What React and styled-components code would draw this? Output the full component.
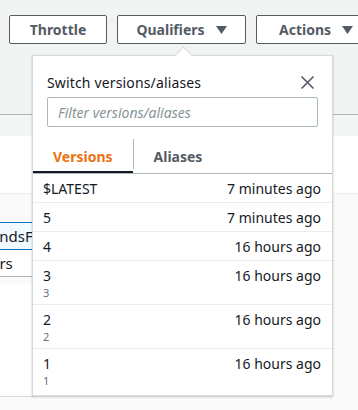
import React from 'react'
import styled, { createGlobalStyle } from 'styled-components'

const GlobalStyle = createGlobalStyle`
  html, body {
    margin: 0;
    padding: 0;
    background: #fbfafa;
  }
  body {
    font-family: "Noto Sans", "Open Sans", sans-serif;
    color: #16191f;
    -webkit-font-smoothing: antialiased;
  }
  * { box-sizing: border-box; }
`

const versions = [
    { name: '$LATEST', time: '7 minutes ago' },
    { name: '5', time: '7 minutes ago' },
    { name: '4', time: '16 hours ago' },
    { name: '3', time: '16 hours ago', sub: '3' },
    { name: '2', time: '16 hours ago', sub: '2' },
    { name: '1', time: '16 hours ago', sub: '1' },
]

const Caret = () => (
    <svg width="11" height="8" viewBox="0 0 11 8">
        <path d="M0 0 H11 L5.5 8 Z" fill="currentColor" />
    </svg>
)

const CloseIcon = () => (
    <svg width="15" height="15" viewBox="0 0 15 15">
        <path d="M1.5 1.5 L13.5 13.5 M13.5 1.5 L1.5 13.5" stroke="currentColor" strokeWidth="1.6" fill="none" />
    </svg>
)

const App = () => {
    return (
        <Page>
            <GlobalStyle />
            <Header>
                <ButtonRow>
                    <Button $width={98}>Throttle</Button>
                    <Button $width={129}>Qualifiers <Caret /></Button>
                    <Button $width={120}>Actions <Caret /></Button>
                </ButtonRow>
            </Header>
            <SubStrip />
            <WhitePanel />
            <Canvas>
                <FnBox>
                    <FnName>backendsFunction</FnName>
                    <FnLayers>Layers</FnLayers>
                </FnBox>
                <TriggerBox />
            </Canvas>

            <Popover>
                <PopHead>
                    <PopTitle>Switch versions/aliases</PopTitle>
                    <CloseButton><CloseIcon /></CloseButton>
                </PopHead>
                <FilterInput placeholder="Filter versions/aliases" />
                <Tabs>
                    <Tab $active>Versions</Tab>
                    <TabDivider />
                    <Tab>Aliases</Tab>
                </Tabs>
                <List>
                    {versions.map(v => (
                        <Row key={v.name}>
                            <RowMain>
                                <span>{v.name}</span>
                                <span>{v.time}</span>
                            </RowMain>
                            {v.sub && <RowSub>{v.sub}</RowSub>}
                        </Row>
                    ))}
                </List>
            </Popover>
        </Page>
    )
}

export default App

const Page = styled.div`
position: relative;
width: 358px;
height: 410px;
overflow: hidden;
background: #fbfafa;
`

const Header = styled.div`
height: 115px;
background: #f2f3f3;
border-bottom: 1px solid #aab7b8;
padding: 15px 0 0 9px;
`

const ButtonRow = styled.div`
display: flex;
gap: 10px;
`

const Button = styled.div`
flex: none;
width: ${props => props.$width}px;
height: 29px;
display: flex;
align-items: center;
justify-content: center;
gap: 11px;
border: 1px solid #545b64;
border-radius: 2px;
background: #fff;
color: #545b64;
font-weight: 700;
font-size: 14px;
white-space: nowrap;
`

const SubStrip = styled.div`
height: 21px;
background: #f4f5f5;
`

const WhitePanel = styled.div`
height: 58px;
background: #fff;
border-bottom: 1px solid #eaeded;
`

const Canvas = styled.div`
padding-top: 28px;
display: flex;
flex-direction: column;
gap: 7px;
`

const FnBox = styled.div`
width: 34px;
background: #fff;
border-bottom: 1px solid #aab7b8;
font-size: 15px;
overflow: hidden;
`

const FnName = styled.div`
height: 28px;
line-height: 26px;
background: #f1faff;
border-top: 1px solid #0073bb;
border-bottom: 1px solid #0073bb;
text-indent: -42px;
white-space: nowrap;
overflow: hidden;
`

const FnLayers = styled.div`
height: 26px;
line-height: 26px;
text-indent: -33px;
white-space: nowrap;
overflow: hidden;
`

const TriggerBox = styled.div`
width: 34px;
height: 113px;
background: #fff;
border-bottom: 1px solid #d5dbdb;
`

const Popover = styled.div`
position: absolute;
left: 32px;
top: 55px;
width: 301px;
height: 341px;
background: #fff;
border: 1px solid #d5dbdb;
box-shadow: 0 1px 2px rgba(0, 28, 36, 0.25);
display: flex;
flex-direction: column;
&::before {
    content: '';
    position: absolute;
    left: 50%;
    top: -7px;
    width: 12px;
    height: 12px;
    margin-left: -6px;
    background: #fff;
    border-top: 1px solid #d5dbdb;
    border-left: 1px solid #d5dbdb;
    transform: rotate(45deg);
}
`

const PopHead = styled.div`
display: flex;
align-items: center;
justify-content: space-between;
padding: 12px 17px 0 14px;
height: 41px;
`

const PopTitle = styled.div`
font-size: 14px;
line-height: 20px;
color: #16191f;
letter-spacing: 0.15px;
`

const CloseButton = styled.div`
display: flex;
color: #545b64;
`

const FilterInput = styled.input`
margin: 0 14px 0 14px;
height: 30px;
border: 1px solid #aab7b8;
border-radius: 2px;
padding: 0 10px;
font-family: "Noto Sans", "Open Sans", sans-serif;
font-size: 14px;
&::placeholder {
    color: #879596;
    font-style: italic;
}
`

const Tabs = styled.div`
display: flex;
align-items: center;
margin-top: 12px;
border-bottom: 1px solid #aab7b8;
`

const Tab = styled.div`
height: 34px;
padding: 0 20px;
display: flex;
align-items: center;
font-size: 14px;
font-weight: 700;
color: ${props => props.$active ? '#ec7211' : '#545b64'};
box-shadow: ${props => props.$active ? 'inset 0 -2px 0 #16191f' : 'none'};
`

const TabDivider = styled.div`
width: 1px;
height: 30px;
align-self: flex-start;
background: #aab7b8;
`

const List = styled.div`
display: flex;
flex-direction: column;
`

const Row = styled.div`
padding: 6px 11px 4px 10px;
border-bottom: 1px solid #eaeded;
&:last-child {
    border-bottom: none;
}
`

const RowMain = styled.div`
display: flex;
justify-content: space-between;
font-size: 14px;
line-height: 18px;
color: #16191f;
`

const RowSub = styled.div`
font-size: 11px;
line-height: 16px;
color: #687078;
margin-bottom: -1px;
`
